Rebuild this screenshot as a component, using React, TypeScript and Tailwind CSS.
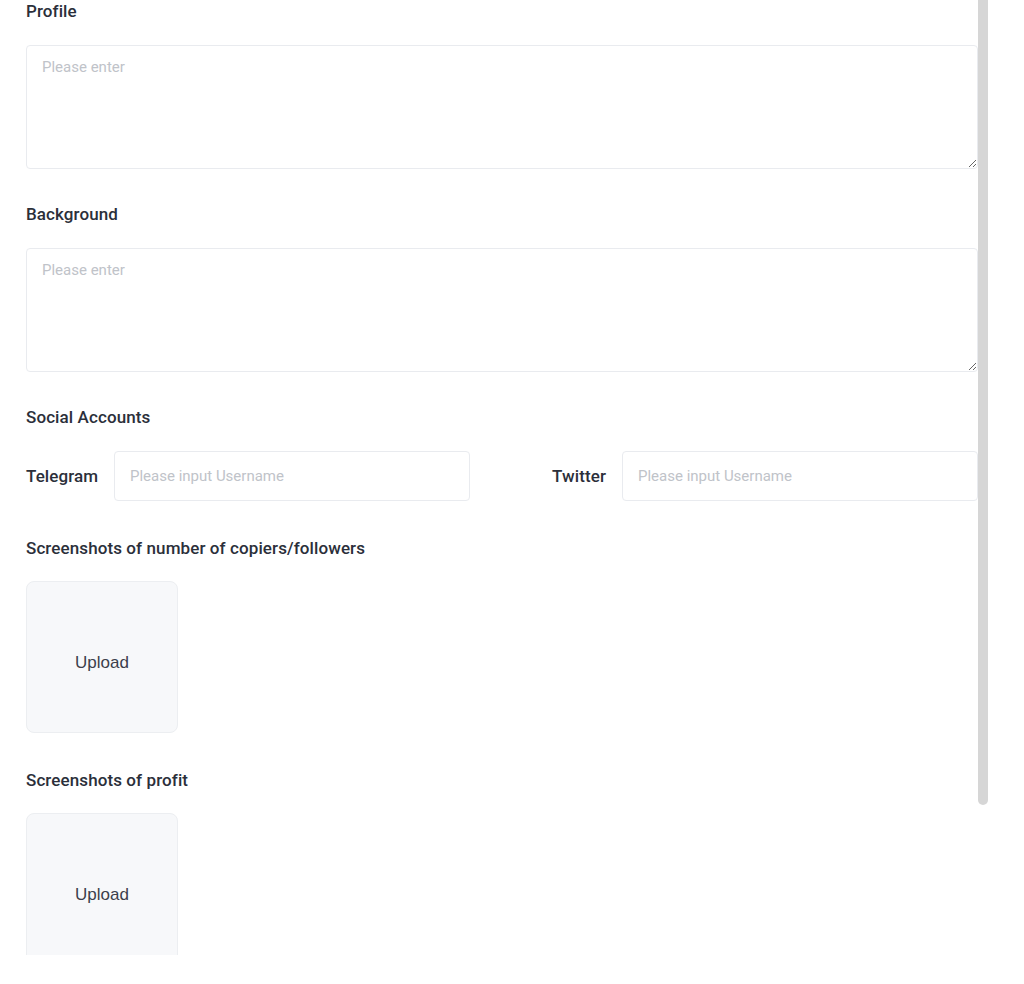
import { useState } from 'react'

const LABEL = "text-[17px] leading-[22px] font-medium text-[#2b2f3a] font-['Roboto',sans-serif] tracking-[0.1px]"
const FIELD =
  "w-full rounded-[4px] border border-[#e9ebef] bg-white text-[15px] text-[#2b2f3a] font-['Roboto',sans-serif] placeholder:text-[#c0c3c9] outline-none"

function Section({
  label,
  children,
  className = '',
  labelGap = 'mb-[23px]',
}: {
  label: string
  children: React.ReactNode
  className?: string
  labelGap?: string
}) {
  return (
    <section className={`flex flex-col ${className}`}>
      <h3 className={`${LABEL} ${labelGap}`}>{label}</h3>
      {children}
    </section>
  )
}

function UploadBox() {
  return (
    <button
      type="button"
      className="flex h-[152px] w-[152px] items-center justify-center rounded-[8px] border border-[#eceef1] bg-[#f7f8fa] pt-3 text-[17px] text-[#3c404b] font-['Liberation_Sans',Arial,sans-serif]"
    >
      Upload
    </button>
  )
}

function SocialField({ label, value, onChange }: { label: string; value: string; onChange: (v: string) => void }) {
  return (
    <div className="flex items-center gap-4">
      <span className={`${LABEL} w-[72px] shrink-0 text-right`}>{label}</span>
      <input
        value={value}
        onChange={e => onChange(e.target.value)}
        placeholder="Please input Username"
        className={`${FIELD} h-[50px] px-[15px]`}
      />
    </div>
  )
}

export default function App() {
  const [profile, setProfile] = useState('')
  const [background, setBackground] = useState('')
  const [telegram, setTelegram] = useState('')
  const [twitter, setTwitter] = useState('')

  return (
    <div className="h-[984px] w-full bg-white">
      <div className="flex h-[955px] w-[988px]">
        <div className="min-w-0 flex-1 overflow-hidden pl-[26px]">
          <div className="flex flex-col gap-[34px] pb-[168px]">
            <Section label="Profile">
              <textarea
                value={profile}
                onChange={e => setProfile(e.target.value)}
                placeholder="Please enter"
                className={`${FIELD} block h-[124px] px-[15px] py-[10px]`}
              />
            </Section>

            <Section label="Background">
              <textarea
                value={background}
                onChange={e => setBackground(e.target.value)}
                placeholder="Please enter"
                className={`${FIELD} block h-[124px] px-[15px] py-[10px]`}
              />
            </Section>

            <Section label="Social Accounts">
              <div className="grid grid-cols-2 gap-16">
                <SocialField label="Telegram" value={telegram} onChange={setTelegram} />
                <SocialField label="Twitter" value={twitter} onChange={setTwitter} />
              </div>
            </Section>

            <Section label="Screenshots of number of copiers/followers" className="mt-[2px]" labelGap="mb-[22px]">
              <UploadBox />
            </Section>

            <Section label="Screenshots of profit" className="mt-[2px]" labelGap="mb-[22px]">
              <UploadBox />
            </Section>
          </div>
        </div>

        {/* scrollbar */}
        <div className="w-[10px] shrink-0">
          <div className="h-[805px] w-full rounded-b-[5px] bg-[#d6d6d6]" />
        </div>
      </div>
    </div>
  )
}
